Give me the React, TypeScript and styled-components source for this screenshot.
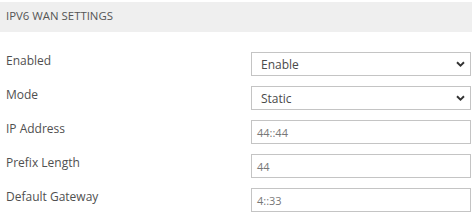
import styled, { createGlobalStyle } from 'styled-components';

const GlobalStyle = createGlobalStyle`
  html, body {
    margin: 0;
    padding: 0;
    background: #ffffff;
  }
  body {
    font-family: 'Open Sans', 'Noto Sans', sans-serif;
  }
`;

const fields = [
  { label: 'Enabled', kind: 'select', value: 'Enable' },
  { label: 'Mode', kind: 'select', value: 'Static' },
  { label: 'IP Address', kind: 'input', value: '44::44' },
  { label: 'Prefix Length', kind: 'input', value: '44' },
  { label: 'Default Gateway', kind: 'input', value: '4::33' },
];

const Chevron = () => (
  <svg width="9" height="6" viewBox="0 0 9 6">
    <path d="M1 1.2 L4.5 4.6 L8 1.2" fill="none" stroke="#333" strokeWidth="1.9" />
  </svg>
);

const App = () => {
  return (
    <Panel>
      <GlobalStyle />
      <Header>IPV6 WAN SETTINGS</Header>
      <Form>
        {fields.map((f) => (
          <Row key={f.label}>
            <Label>{f.label}</Label>
            {f.kind === 'select' ? (
              <SelectBox>
                <span>{f.value}</span>
                <Chevron />
              </SelectBox>
            ) : (
              <InputBox>{f.value}</InputBox>
            )}
          </Row>
        ))}
      </Form>
    </Panel>
  );
};

export default App;

const Panel = styled.div`
  width: 474px;
  height: 219px;
  padding-top: 2px;
  box-sizing: border-box;
  overflow: hidden;
`;

const Header = styled.div`
  height: 30px;
  width: 472px;
  background: #efefef;
  color: #555;
  font-size: 11.4px;
  line-height: 28px;
  padding-left: 6px;
  box-sizing: border-box;
`;

const Form = styled.div`
  display: flex;
  flex-direction: column;
  gap: 10px;
  margin-top: 20px;
  padding-left: 6px;
`;

const Row = styled.div`
  display: grid;
  grid-template-columns: 245px 220px;
  align-items: center;
  height: 24px;
`;

const Label = styled.div`
  color: #505050;
  font-size: 12px;
  margin-top: -8px;
`;

const SelectBox = styled.div`
  display: flex;
  align-items: center;
  justify-content: space-between;
  height: 24px;
  border: 1px solid #c4c4c4;
  box-sizing: border-box;
  padding: 0 5px 0 9px;
  color: #4a4a4a;
  font-size: 12px;
`;

const InputBox = styled.div`
  display: flex;
  align-items: center;
  height: 24px;
  border: 1px solid #c4c4c4;
  box-sizing: border-box;
  padding: 0 5px;
  color: #777;
  font-size: 11px;
`;
